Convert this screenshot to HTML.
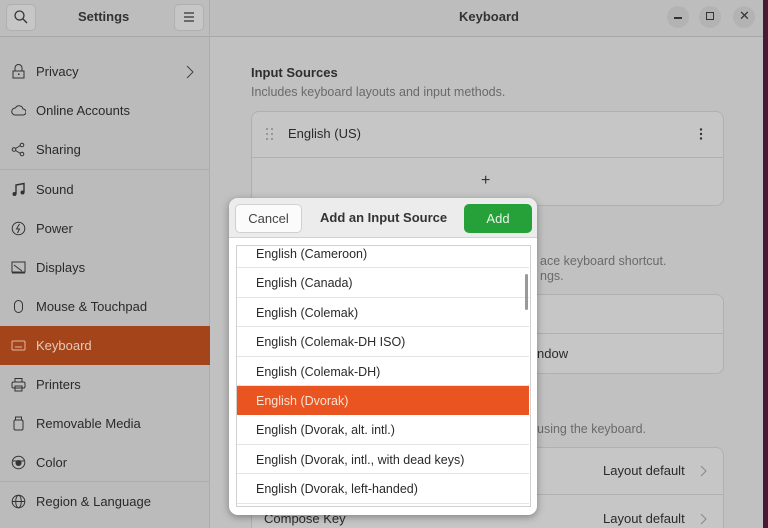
<!DOCTYPE html>
<html style="overflow:hidden;width:768px;height:528px"><head><style>
*{margin:0;padding:0;box-sizing:border-box}
body{width:768px;height:528px;overflow:hidden;background:#b8b8b8;font-family:"Liberation Sans",sans-serif;font-size:13px;color:#2a2a2a;position:relative}
.a{position:absolute}
.side{left:0;top:37px;width:210px;height:491px;background:#bbbbbb;border-right:1px solid #acacac}
.main{left:210px;top:37px;width:553px;height:491px;background:#c1c1c1}
.hdr{left:0;top:0;width:763px;height:37px;background:#bdbdbd;border-bottom:1px solid #a8a8a8}
.purple{left:763px;top:0;width:5px;height:528px;background:#4a1a34}
.it{left:0;width:210px;height:39px;display:flex;align-items:center}
.it span{position:absolute;left:36px}
.ic{position:absolute;left:11px;top:12px;width:15px;height:15px}
.sep{left:0;width:210px;height:1px;background:#adadad}
.card{left:251px;width:473px;background:#c6c6c6;border:1px solid #b0b0b0;border-radius:8px}
.row{left:237px;width:292px;height:29.4px;border-bottom:1px solid #e4e4e4;padding-left:19px;line-height:30px;font-size:12.5px;color:#2a2a2a}
.cb{border-radius:50%;width:22px;height:22px;background:#b3b3b3;top:6px}
</style></head><body>
<div class="a hdr"></div>
<div class="a" style="left:209px;top:0;width:1px;height:37px;background:#adadad"></div>
<div class="a" style="left:6px;top:4px;width:30px;height:27px;background:#c6c6c6;border-radius:5px;border:1px solid #b0b0b0"></div>
<svg class="a" style="left:13px;top:9px" width="16" height="16"><circle cx="6.5" cy="6.5" r="4.5" fill="none" stroke="#333" stroke-width="1.3"/><path d="M10 10l4 4" stroke="#333" stroke-width="1.3"/></svg>
<div class="a" style="left:78px;top:9px;font-weight:bold;font-size:13px;color:#333">Settings</div>
<div class="a" style="left:174px;top:4px;width:30px;height:27px;background:#c6c6c6;border-radius:5px;border:1px solid #b0b0b0"></div>
<svg class="a" style="left:182px;top:11px" width="14" height="12"><path d="M2 2h10M2 6h10M2 10h10" stroke="#333" stroke-width="1.2"/></svg>
<div class="a" style="left:459px;top:9px;font-weight:bold;color:#333">Keyboard</div>
<div class="a cb" style="left:667px"></div><div class="a" style="left:674px;top:17px;width:8px;height:1.5px;background:#333"></div>
<div class="a cb" style="left:699px"></div><div class="a" style="left:706px;top:12px;width:8px;height:8px;border:1.3px solid #333"></div>
<div class="a cb" style="left:733px"></div><div class="a" style="left:739px;top:8px;font-size:13px;color:#333">✕</div>

<div class="a side">
<div class="a sep" style="top:132px"></div>
<div class="a sep" style="top:444px"></div>
</div>
<div class="a it" style="top:52px"><svg class="ic" viewBox="0 0 15 15"><rect x="2" y="7" width="11" height="7" fill="none" stroke="#333"/><path d="M4 7V4a3.5 3.5 0 0 1 7 0v3" fill="none" stroke="#333"/><rect x="7" y="9.5" width="1.5" height="1.5" fill="#333"/></svg><span>Privacy</span><svg class="a" style="left:186px;top:13px" width="8" height="14"><path d="M1 1l6 6-6 6" fill="none" stroke="#444"/></svg></div>
<div class="a it" style="top:91px"><svg class="ic" viewBox="0 0 15 15"><path d="M4 12h8a3 3 0 0 0 0-6 4 4 0 0 0-7.5-1A3.5 3.5 0 0 0 4 12z" fill="none" stroke="#333"/></svg><span>Online Accounts</span></div>
<div class="a it" style="top:130px"><svg class="ic" viewBox="0 0 15 15"><circle cx="3" cy="7.5" r="1.8" fill="none" stroke="#333"/><circle cx="11" cy="3" r="1.8" fill="none" stroke="#333"/><circle cx="11" cy="12" r="1.8" fill="none" stroke="#333"/><path d="M4.5 6.5l5-3M4.5 8.5l5 3" stroke="#333"/></svg><span>Sharing</span></div>
<div class="a it" style="top:170px"><svg class="ic" viewBox="0 0 15 15"><path d="M5 12V3l8-1.5v9" fill="none" stroke="#333" stroke-width="1.4"/><circle cx="3.5" cy="12" r="2" fill="#333"/><circle cx="11.5" cy="10.5" r="2" fill="#333"/></svg><span>Sound</span></div>
<div class="a it" style="top:209px"><svg class="ic" viewBox="0 0 15 15"><circle cx="7.5" cy="7.5" r="6.3" fill="none" stroke="#333"/><path d="M8.5 3L5.5 8h3l-2 4" fill="none" stroke="#333"/></svg><span>Power</span></div>
<div class="a it" style="top:248px"><svg class="ic" viewBox="0 0 15 15"><rect x="1" y="2" width="13" height="10" fill="none" stroke="#333"/><path d="M3 5l8 6M1 13h13" stroke="#333"/></svg><span>Displays</span></div>
<div class="a it" style="top:287px"><svg class="ic" viewBox="0 0 15 15"><rect x="3.5" y="1.5" width="8" height="12" rx="4" fill="none" stroke="#333"/></svg><span>Mouse &amp; Touchpad</span></div>
<div class="a it" style="top:326px;background:#a4441b;color:#e8c9b8"><svg class="ic" viewBox="0 0 15 15"><rect x="1" y="3" width="13" height="9" rx="1" fill="none" stroke="#e0b8a0"/><path d="M4 9h7" stroke="#e0b8a0"/></svg><span>Keyboard</span></div>
<div class="a it" style="top:365px"><svg class="ic" viewBox="0 0 15 15"><rect x="1" y="5" width="13" height="6" rx="1.5" fill="none" stroke="#333"/><rect x="4" y="1.5" width="7" height="3.5" fill="none" stroke="#333"/><rect x="4" y="9" width="7" height="5" fill="none" stroke="#333"/></svg><span>Printers</span></div>
<div class="a it" style="top:404px"><svg class="ic" viewBox="0 0 15 15"><rect x="3" y="4" width="9" height="10" rx="1.5" fill="none" stroke="#333"/><rect x="4.5" y="1" width="6" height="3" fill="none" stroke="#333"/></svg><span>Removable Media</span></div>
<div class="a it" style="top:443px"><svg class="ic" viewBox="0 0 15 15"><circle cx="7.5" cy="7.5" r="6.3" fill="none" stroke="#333"/><circle cx="7.5" cy="8" r="3" fill="#333"/><path d="M2 6h11" stroke="#333"/></svg><span>Color</span></div>
<div class="a it" style="top:482px"><svg class="ic" viewBox="0 0 15 15"><circle cx="7.5" cy="7.5" r="6.3" fill="none" stroke="#333"/><ellipse cx="7.5" cy="7.5" rx="2.8" ry="6.3" fill="none" stroke="#333"/><path d="M1.2 7.5h12.6" stroke="#333"/></svg><span>Region &amp; Language</span></div>

<div class="a main"></div>
<div class="a purple"></div>
<div class="a" style="left:251px;top:65px;font-weight:bold;color:#2e2e2e">Input Sources</div>
<div class="a" style="left:251px;top:85px;color:#6a6a6a;font-size:12.5px">Includes keyboard layouts and input methods.</div>
<div class="a card" style="top:111px;height:95px"></div>
<div class="a" style="left:252px;top:157px;width:471px;height:1px;background:#b0b0b0"></div>
<svg class="a" style="left:265px;top:127px" width="10" height="14"><g fill="#888"><circle cx="2" cy="2" r="1"/><circle cx="7" cy="2" r="1"/><circle cx="2" cy="7" r="1"/><circle cx="7" cy="7" r="1"/><circle cx="2" cy="12" r="1"/><circle cx="7" cy="12" r="1"/></g></svg>
<div class="a" style="left:288px;top:126px">English (US)</div>
<svg class="a" style="left:698px;top:127px" width="6" height="14"><g fill="#333"><circle cx="3" cy="2.5" r="1.2"/><circle cx="3" cy="7" r="1.2"/><circle cx="3" cy="11.5" r="1.2"/></g></svg>
<div class="a" style="left:481px;top:172px;font-size:16px;color:#333">+</div>
<div class="a" style="left:540px;top:254px;color:#6a6a6a;font-size:12.5px">ace keyboard shortcut.</div>
<div class="a" style="left:540px;top:269px;color:#6a6a6a;font-size:12.5px">ngs.</div>
<div class="a card" style="top:294px;height:80px"></div>
<div class="a" style="left:252px;top:333px;width:471px;height:1px;background:#b0b0b0"></div>
<div class="a" style="left:537px;top:346px">ndow</div>
<div class="a" style="left:537px;top:422px;color:#6a6a6a;font-size:12.5px">using the keyboard.</div>
<div class="a card" style="top:447px;height:81px;border-bottom:none;border-radius:8px 8px 0 0"></div>
<div class="a" style="left:252px;top:494px;width:471px;height:1px;background:#b0b0b0"></div>
<div class="a" style="left:603px;top:463px">Layout default</div>
<svg class="a" style="left:700px;top:465px" width="7" height="12"><path d="M1 1l5 5-5 5" fill="none" stroke="#888"/></svg>
<div class="a" style="left:603px;top:511px">Layout default</div>
<svg class="a" style="left:700px;top:513px" width="7" height="12"><path d="M1 1l5 5-5 5" fill="none" stroke="#888"/></svg>
<div class="a" style="left:264px;top:511px">Compose Key</div>

<div class="a" style="left:229px;top:198px;width:308px;height:317px;background:#fff;border-radius:9px;box-shadow:0 2px 8px rgba(0,0,0,.35);overflow:hidden">
<div class="a" style="left:0;top:0;width:308px;height:40px;background:#ececec;border-bottom:1px solid #d2d2d2"></div>
<div class="a" style="left:6px;top:6px;width:67px;height:29px;background:#fbfbfb;border:1px solid #d0d0d0;border-radius:5px;text-align:center;line-height:27px;color:#444">Cancel</div>
<div class="a" style="left:91px;top:12px;font-weight:bold;color:#333">Add an Input Source</div>
<div class="a" style="left:235px;top:6px;width:68px;height:29px;background:#26a039;border-radius:5px;text-align:center;line-height:29px;color:#e6f5e6">Add</div>
<div class="a" style="left:7px;top:47px;width:295px;height:262px;border:1px solid #d0d0d0"></div>
</div>
<div class="a row" style="top:239px;height:29px">English (Cameroon)</div>
<div class="a row" style="top:268.4px">English (Canada)</div>
<div class="a row" style="top:297.8px">English (Colemak)</div>
<div class="a row" style="top:327.2px">English (Colemak-DH ISO)</div>
<div class="a row" style="top:356.6px">English (Colemak-DH)</div>
<div class="a row" style="top:386px;background:#e95420;color:#fbe3d6;border-bottom:none">English (Dvorak)</div>
<div class="a row" style="top:415.4px">English (Dvorak, alt. intl.)</div>
<div class="a row" style="top:444.8px">English (Dvorak, intl., with dead keys)</div>
<div class="a row" style="top:474.2px;height:30px">English (Dvorak, left-handed)</div>
<div class="a" style="left:237px;top:239px;width:292px;height:7px;background:#fff"></div>
<div class="a" style="left:236px;top:245px;width:294px;height:1px;background:#d0d0d0"></div>
<div class="a" style="left:525px;top:274px;width:2.5px;height:36px;background:#999;border-radius:2px"></div>
</body></html>
